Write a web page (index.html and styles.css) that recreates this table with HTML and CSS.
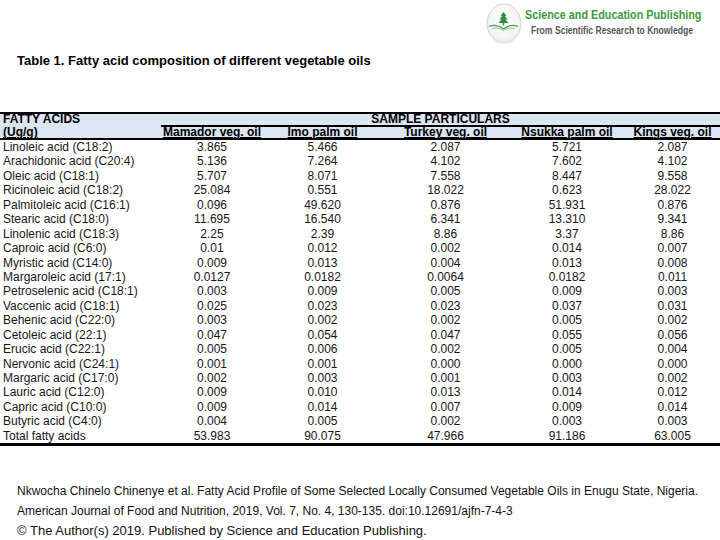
FILE: index.html
```html
<!DOCTYPE html>
<html lang="en">
<head>
<meta charset="utf-8">
<title>Table 1. Fatty acid composition of different vegetable oils</title>
<link rel="stylesheet" href="styles.css">
</head>
<body>
<header class="masthead">
  <div class="brand">
    <svg class="brand-mark" width="38" height="44" viewBox="0 0 38 44" aria-hidden="true">
      <defs>
        <radialGradient id="disc" cx="50%" cy="45%" r="55%">
          <stop offset="0%" stop-color="#ffffff"/>
          <stop offset="80%" stop-color="#f4f4f4"/>
          <stop offset="100%" stop-color="#e6e6e6"/>
        </radialGradient>
      </defs>
      <ellipse cx="19" cy="22.5" rx="17" ry="19.5" fill="url(#disc)" stroke="#d2d2d2" stroke-width="1"/>
      <path d="M18.5 11 L15.5 15 L17 15 L14.5 18.5 L16.5 18.5 L13.5 22 L17.8 22 L17.8 24.5 L19.2 24.5 L19.2 22 L23.5 22 L20.5 18.5 L22.5 18.5 L20 15 L21.5 15 Z" fill="#2f8f3c"/>
      <path d="M4 25.5 C9 23.5 14 24.5 18.5 28 C23 24.5 28 23.5 33 25.5" fill="none" stroke="#4aa357" stroke-width="1.3"/>
      <path d="M7 27.5 C11 26.5 15 27 18.5 29.5 C22 27 26 26.5 30 27.5" fill="none" stroke="#7fc08a" stroke-width="0.9"/>
    </svg>
    <div class="brand-text">
      <div class="brand-name">Science and Education Publishing</div>
      <div class="brand-tag">From Scientific Research to Knowledge</div>
    </div>
  </div>
</header>

<h1 class="title">Table 1. Fatty acid composition of different vegetable oils</h1>

<div class="tbl">
  <div class="thead">
    <div class="h-first">FATTY ACIDS</div>
    <div class="h-group">SAMPLE PARTICULARS</div>
    <div class="h-unit"><u>(Ug/g)</u></div>
    <div class="h-col"><u>Mamador veg. oil</u></div>
    <div class="h-col"><u>Imo palm oil</u></div>
    <div class="h-col"><u>Turkey veg. oil</u></div>
    <div class="h-col"><u>Nsukka palm oil</u></div>
    <div class="h-col"><u>Kings veg. oil</u></div>
  </div>
  <div class="tbody">
    <div class="c-name">Linoleic acid (C18:2)</div><div>3.865</div><div>5.466</div><div>2.087</div><div>5.721</div><div>2.087</div>
    <div class="c-name">Arachidonic acid (C20:4)</div><div>5.136</div><div>7.264</div><div>4.102</div><div>7.602</div><div>4.102</div>
    <div class="c-name">Oleic acid (C18:1)</div><div>5.707</div><div>8.071</div><div>7.558</div><div>8.447</div><div>9.558</div>
    <div class="c-name">Ricinoleic acid (C18:2)</div><div>25.084</div><div>0.551</div><div>18.022</div><div>0.623</div><div>28.022</div>
    <div class="c-name">Palmitoleic acid (C16:1)</div><div>0.096</div><div>49.620</div><div>0.876</div><div>51.931</div><div>0.876</div>
    <div class="c-name">Stearic acid (C18:0)</div><div>11.695</div><div>16.540</div><div>6.341</div><div>13.310</div><div>9.341</div>
    <div class="c-name">Linolenic acid (C18:3)</div><div>2.25</div><div>2.39</div><div>8.86</div><div>3.37</div><div>8.86</div>
    <div class="c-name">Caproic acid (C6:0)</div><div>0.01</div><div>0.012</div><div>0.002</div><div>0.014</div><div>0.007</div>
    <div class="c-name">Myristic acid (C14:0)</div><div>0.009</div><div>0.013</div><div>0.004</div><div>0.013</div><div>0.008</div>
    <div class="c-name">Margaroleic acid (17:1)</div><div>0.0127</div><div>0.0182</div><div>0.0064</div><div>0.0182</div><div>0.011</div>
    <div class="c-name">Petroselenic acid (C18:1)</div><div>0.003</div><div>0.009</div><div>0.005</div><div>0.009</div><div>0.003</div>
    <div class="c-name">Vaccenic acid (C18:1)</div><div>0.025</div><div>0.023</div><div>0.023</div><div>0.037</div><div>0.031</div>
    <div class="c-name">Behenic acid (C22:0)</div><div>0.003</div><div>0.002</div><div>0.002</div><div>0.005</div><div>0.002</div>
    <div class="c-name">Cetoleic acid (22:1)</div><div>0.047</div><div>0.054</div><div>0.047</div><div>0.055</div><div>0.056</div>
    <div class="c-name">Erucic acid (C22:1)</div><div>0.005</div><div>0.006</div><div>0.002</div><div>0.005</div><div>0.004</div>
    <div class="c-name">Nervonic acid (C24:1)</div><div>0.001</div><div>0.001</div><div>0.000</div><div>0.000</div><div>0.000</div>
    <div class="c-name">Margaric acid (C17:0)</div><div>0.002</div><div>0.003</div><div>0.001</div><div>0.003</div><div>0.002</div>
    <div class="c-name">Lauric acid (C12:0)</div><div>0.009</div><div>0.010</div><div>0.013</div><div>0.014</div><div>0.012</div>
    <div class="c-name">Capric acid (C10:0)</div><div>0.009</div><div>0.014</div><div>0.007</div><div>0.009</div><div>0.014</div>
    <div class="c-name">Butyric acid (C4:0)</div><div>0.004</div><div>0.005</div><div>0.002</div><div>0.003</div><div>0.003</div>
    <div class="c-name">Total fatty acids</div><div>53.983</div><div>90.075</div><div>47.966</div><div>91.186</div><div>63.005</div>
  </div>
</div>

<footer class="cite">
  <p class="cite-line">Nkwocha Chinelo Chinenye et al. Fatty Acid Profile of Some Selected Locally Consumed Vegetable Oils in Enugu State, Nigeria.</p>
  <p class="cite-line">American Journal of Food and Nutrition, 2019, Vol. 7, No. 4, 130-135. doi:10.12691/ajfn-7-4-3</p>
  <p class="cite-line cite-copy">© The Author(s) 2019. Published by Science and Education Publishing.</p>
</footer>
</body>
</html>
```

FILE: styles.css
```css
* { box-sizing: border-box; }

html, body {
  margin: 0;
  padding: 0;
  background: #ffffff;
}

body {
  width: 720px;
  height: 540px;
  overflow: hidden;
  font-family: "Liberation Sans", Arial, sans-serif;
  color: #111;
}

/* ---------- masthead ---------- */
.masthead {
  height: 46px;
  display: flex;
  justify-content: flex-end;
  padding-right: 20px;
}

.brand {
  display: flex;
  align-items: flex-start;
  gap: 2px;
  width: 215px;
}

.brand-mark {
  flex: none;
  margin-top: 1px;
}

.brand-text {
  display: flex;
  flex-direction: column;
  padding-top: 8px;
}

.brand-name {
  font-weight: bold;
  font-size: 12px;
  line-height: 14px;
  color: #3b9a45;
  white-space: nowrap;
  transform: scaleX(0.9);
  transform-origin: left center;
}

.brand-tag {
  margin-top: 3px;
  margin-left: 6px;
  font-weight: bold;
  font-size: 10px;
  line-height: 12px;
  color: #555;
  white-space: nowrap;
  transform: scaleX(0.86);
  transform-origin: left center;
}

/* ---------- title ---------- */
.title {
  margin: 7px 0 0 0;
  padding-left: 17px;
  font-size: 13px;
  line-height: 16px;
  font-weight: bold;
  color: #000;
  height: 59px;
}

/* ---------- table ---------- */
.tbl {
  width: 720px;
  font-size: 12px;
}

.thead,
.tbody {
  display: grid;
  grid-template-columns: 161px 102px 119px 127px 116px 95px;
}

.thead {
  background: #dce6f2;
  border-top: 2px solid #000;
  border-bottom: 2px solid #000;
  font-weight: bold;
  color: #000;
  line-height: 11px;
}

.h-first {
  height: 13px;
  padding-left: 3px;
}

.h-group {
  grid-column: 2 / span 5;
  height: 13px;
  border-bottom: 2px solid #000;
  text-align: center;
}

.h-unit {
  height: 11px;
  padding-left: 3px;
}

.h-col {
  height: 11px;
  text-align: center;
  white-space: nowrap;
}

.thead u {
  text-decoration-thickness: 1px;
  text-underline-offset: 1px;
}

.tbody {
  grid-auto-rows: 14.45px;
  line-height: 14.45px;
  border-bottom: 3px solid #000;
  text-align: center;
  color: #161616;
}

.tbody .c-name {
  text-align: left;
  padding-left: 3px;
  white-space: nowrap;
}

/* ---------- citation ---------- */
.cite {
  padding: 35px 0 0 17px;
}

.cite-line {
  margin: 0;
  font-size: 12px;
  line-height: 20px;
  color: #111;
  white-space: nowrap;
}

.cite-copy {
  font-size: 13px;
}
```
